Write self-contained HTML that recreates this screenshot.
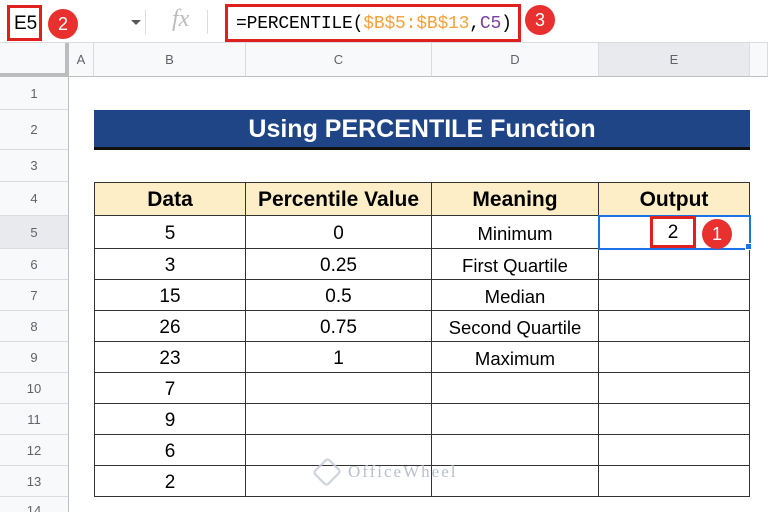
<!DOCTYPE html>
<html><head><style>
*{margin:0;padding:0;box-sizing:border-box}
html,body{width:768px;height:512px;overflow:hidden}
body{background:#fff;font-family:"Liberation Sans",Arial,sans-serif;position:relative}
.a{position:absolute}
.rh{position:absolute;left:0;width:69px;background:#f8f9fa;border-bottom:1px solid #dadce0;border-right:1px solid #c0c0c0;color:#5f6368;font-size:13px;display:flex;align-items:center;justify-content:center}
.ch{position:absolute;top:43px;height:34px;background:#f8f9fa;border-right:1px solid #dadce0;border-bottom:1px solid #c0c0c0;color:#5f6368;font-size:13px;display:flex;align-items:center;justify-content:center}
.c{position:absolute;display:flex;align-items:center;justify-content:center;font-size:19px;color:#000;border-right:1px solid #333;border-bottom:1px solid #333;padding-top:3px}
.hd{font-weight:bold;font-size:21px;background:#fdeec8;padding-top:2px}
.badge{position:absolute;width:30px;height:30px;border-radius:50%;background:#e8302e;color:#fff;font-size:18px;display:flex;align-items:center;justify-content:center}
</style></head><body>
<div class="a" style="left:0;top:0;width:768px;height:43px;background:#fff;border-bottom:1px solid #dadce0"></div>
<div class="a" style="left:7px;top:5px;width:35px;height:36px;border:3px solid #e0201e;font-size:19px;padding:5px 0 0 4px">E5</div>
<div class="badge" style="left:48px;top:9px">2</div>
<div class="a" style="left:131px;top:20px;width:0;height:0;border-left:5px solid transparent;border-right:5px solid transparent;border-top:5px solid #555"></div>
<div class="a" style="left:145px;top:10px;width:1px;height:24px;background:#dadce0"></div>
<div class="a" style="left:172px;top:6px;font-family:'Liberation Serif',serif;font-style:italic;font-size:24px;color:#bbb">fx</div>
<div class="a" style="left:207px;top:10px;width:1px;height:24px;background:#dadce0"></div>
<div class="a" style="left:225px;top:4px;width:296px;height:38px;border:3px solid #e0201e;font-family:'Liberation Mono',monospace;font-size:18px;padding:7px 0 0 8px;letter-spacing:-0.2px;white-space:nowrap">=PERCENTILE(<span style="color:#f4a13b">$B$5:$B$13</span>,<span style="color:#7a3fa3">C5</span>)</div>
<div class="badge" style="left:525px;top:5px">3</div>
<div class="a" style="left:0;top:43px;width:69px;height:34px;background:#f8f9fa;border-right:4px solid #bdbdbd;border-bottom:4px solid #bdbdbd"></div>
<div class="ch" style="left:69px;width:25px">A</div>
<div class="ch" style="left:94px;width:152px">B</div>
<div class="ch" style="left:246px;width:186px">C</div>
<div class="ch" style="left:432px;width:167px">D</div>
<div class="ch" style="left:599px;width:151px;background:#e8eaed">E</div>
<div class="ch" style="left:750px;width:18px"></div>
<div class="rh" style="top:77px;height:33px">1</div>
<div class="rh" style="top:110px;height:40px">2</div>
<div class="rh" style="top:150px;height:32px">3</div>
<div class="rh" style="top:182px;height:34px">4</div>
<div class="rh" style="top:216px;height:33px;background:#e8eaed">5</div>
<div class="rh" style="top:249px;height:31px">6</div>
<div class="rh" style="top:280px;height:31px">7</div>
<div class="rh" style="top:311px;height:31px">8</div>
<div class="rh" style="top:342px;height:31px">9</div>
<div class="rh" style="top:373px;height:31px">10</div>
<div class="rh" style="top:404px;height:31px">11</div>
<div class="rh" style="top:435px;height:31px">12</div>
<div class="rh" style="top:466px;height:31px">13</div>
<div class="rh" style="top:497px;height:15px;align-items:flex-start;padding-top:6px;overflow:hidden;border-bottom:none">14</div>
<div class="a" style="left:94px;top:110px;width:656px;height:40px;background:#1f4587;border-bottom:3px solid #111;color:#fff;font-weight:bold;font-size:25px;display:flex;align-items:center;justify-content:center;padding-top:2px">Using PERCENTILE Function</div>
<div class="a" style="left:94px;top:182px;width:656px;height:315px;border-left:1px solid #333;border-top:1px solid #333"></div>
<div id="t"></div>
<script>
var cols=[[95,151],[246,186],[432,167],[599,151]];
var rows=[[183,33],[216,33],[249,31],[280,31],[311,31],[342,31],[373,31],[404,31],[435,31],[466,31]];
var d=[["Data","Percentile Value","Meaning","Output"],["5","0","Minimum",""],["3","0.25","First Quartile",""],["15","0.5","Median",""],["26","0.75","Second Quartile",""],["23","1","Maximum",""],["7","","",""],["9","","",""],["6","","",""],["2","","",""]];
var h="";
for(var r=0;r<10;r++)for(var c=0;c<4;c++){
var fs=(c==2&&r>0)?"font-size:18.5px;":"";
h+='<div class="c'+(r==0?' hd':'')+'" style="'+fs+'left:'+cols[c][0]+'px;top:'+rows[r][0]+'px;width:'+cols[c][1]+'px;height:'+rows[r][1]+'px">'+d[r][c]+'</div>';}
document.getElementById('t').innerHTML=h;
</script>
<div class="a" style="left:598px;top:215px;width:153px;height:35px;border:2px solid #1a73e8"></div>
<div class="a" style="left:745px;top:243px;width:7px;height:7px;background:#1a73e8;border:1px solid #fff"></div>
<div class="a" style="left:650px;top:216px;width:46px;height:32px;border:3px solid #e0201e;background:#fff;font-size:19px;display:flex;align-items:center;justify-content:center;padding-top:2px">2</div>
<div class="badge" style="left:702px;top:219px">1</div>
<div class="a" style="left:314px;top:458px;width:26px;height:28px;border:3px solid #c5ccd6;border-radius:5px;transform:rotate(45deg) scale(.8);opacity:.8"></div>
<div class="a" style="left:348px;top:462px;font-family:'Liberation Serif',serif;font-size:17px;color:#b8bfca;letter-spacing:2px">OfficeWheel</div>
</body></html>
